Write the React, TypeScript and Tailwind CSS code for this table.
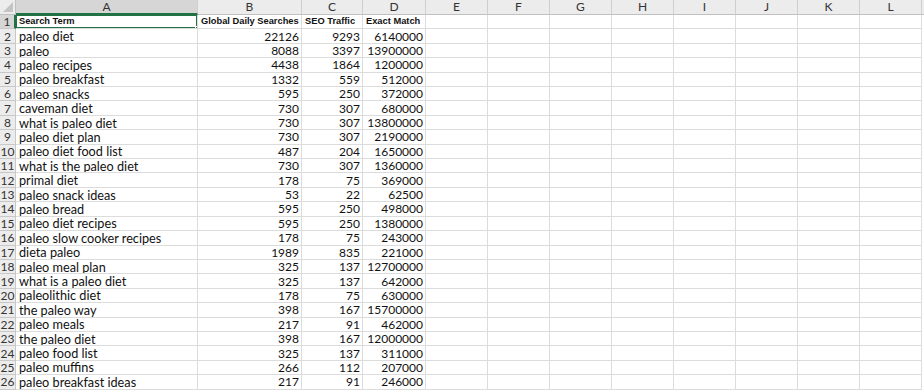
import React from "react";

const rows: [string, number, number, number][] = [
  ["paleo diet", 22126, 9293, 6140000],
  ["paleo", 8088, 3397, 13900000],
  ["paleo recipes", 4438, 1864, 1200000],
  ["paleo breakfast", 1332, 559, 512000],
  ["paleo snacks", 595, 250, 372000],
  ["caveman diet", 730, 307, 680000],
  ["what is paleo diet", 730, 307, 13800000],
  ["paleo diet plan", 730, 307, 2190000],
  ["paleo diet food list", 487, 204, 1650000],
  ["what is the paleo diet", 730, 307, 1360000],
  ["primal diet", 178, 75, 369000],
  ["paleo snack ideas", 53, 22, 62500],
  ["paleo bread", 595, 250, 498000],
  ["paleo diet recipes", 595, 250, 1380000],
  ["paleo slow cooker recipes", 178, 75, 243000],
  ["dieta paleo", 1989, 835, 221000],
  ["paleo meal plan", 325, 137, 12700000],
  ["what is a paleo diet", 325, 137, 642000],
  ["paleolithic diet", 178, 75, 630000],
  ["the paleo way", 398, 167, 15700000],
  ["paleo meals", 217, 91, 462000],
  ["the paleo diet", 398, 167, 12000000],
  ["paleo food list", 325, 137, 311000],
  ["paleo muffins", 266, 112, 207000],
  ["paleo breakfast ideas", 217, 91, 246000],
];

const letters = ["E", "F", "G", "H", "I", "J", "K", "L"];

const body = "font-['Lato','Liberation_Sans',sans-serif] text-[12.7px] text-[#111]";
const cell = "h-full shrink-0 border-r border-b border-[#dcdcdc] overflow-hidden whitespace-nowrap flex items-center pt-[1px]";
const num = "justify-end pr-[2px] font-['Liberation_Sans_Narrow','Lato',sans-serif] text-[12px]";
const rowHead =
  "w-[16px] h-full shrink-0 bg-[#ececec] border-r border-b border-[#c8c8c8] flex items-center justify-center text-[12px] text-[#333] font-['Liberation_Sans_Narrow','Lato',sans-serif] pt-[1px]";
const hdr = "font-['Liberation_Sans',Arial,sans-serif] font-bold text-[9.3px] pl-[3px] text-[#111]";

function Empties() {
  return (
    <>
      {letters.map((l) => (
        <div key={l} className={`${cell} w-[62px]`} />
      ))}
    </>
  );
}

export default function App() {
  return (
    <div className="w-[924px] h-[391px] bg-white overflow-hidden select-none">
      {/* column headers */}
      <div className="flex h-[15px]">
        <div className="w-[16px] h-full shrink-0 bg-[#ececec] border-r border-b border-[#c0c0c0] relative overflow-hidden">
          <div className="absolute right-[2px] bottom-[2px] w-0 h-0 border-l-[10px] border-l-transparent border-b-[10px] border-b-[#c4c4c4]" />
        </div>
        {[
          ["A", "w-[182px]", true],
          ["B", "w-[104px]", false],
          ["C", "w-[61px]", false],
          ["D", "w-[63px]", false],
          ...letters.map((l) => [l, "w-[62px]", false] as [string, string, boolean]),
        ].map(([l, w, sel]) => (
          <div
            key={l as string}
            className={`${w} h-full shrink-0 flex items-center justify-center border-r border-[#cfcfcf] text-[12px] text-[#333] font-['Lato','Liberation_Sans',sans-serif] ${
              sel ? "bg-[#d6d6d6] border-b-2 border-b-[#217346] text-[#1f5c3a]" : "bg-[#ececec] border-b border-b-[#c0c0c0]"
            }`}
          >
            {l as string}
          </div>
        ))}
        <div className="flex-1 h-full bg-[#ececec] border-b border-[#c0c0c0]" />
      </div>

      {/* row 1 */}
      <div className="flex h-[14.42px]">
        <div className={`${rowHead} !bg-[#d6d6d6] !border-r-2 !border-r-[#217346] text-[#1f5c3a]`}>1</div>
        <div className={`${cell} w-[182px] relative ${hdr}`}>
          Search Term
          <div className="absolute -left-[1px] -top-[1px] right-[-1px] bottom-[-1px] border-2 border-[#217346]" />
          <div className="absolute right-[-3px] bottom-[-3px] w-[5px] h-[5px] bg-[#217346] border border-white" />
        </div>
        <div className={`${cell} w-[104px] ${hdr}`}>Global Daily Searches</div>
        <div className={`${cell} w-[61px] ${hdr}`}>SEO Traffic</div>
        <div className={`${cell} w-[63px] ${hdr}`}>Exact Match</div>
        <Empties />
      </div>

      {rows.map((r, i) => (
        <div key={i} className={`flex h-[14.42px] ${body}`}>
          <div className={rowHead}>{i + 2}</div>
          <div className={`${cell} w-[182px] pl-[3px]`}>{r[0]}</div>
          <div className={`${cell} w-[104px] ${num}`}>{r[1]}</div>
          <div className={`${cell} w-[61px] ${num}`}>{r[2]}</div>
          <div className={`${cell} w-[63px] ${num}`}>{r[3]}</div>
          <Empties />
        </div>
      ))}
    </div>
  );
}
